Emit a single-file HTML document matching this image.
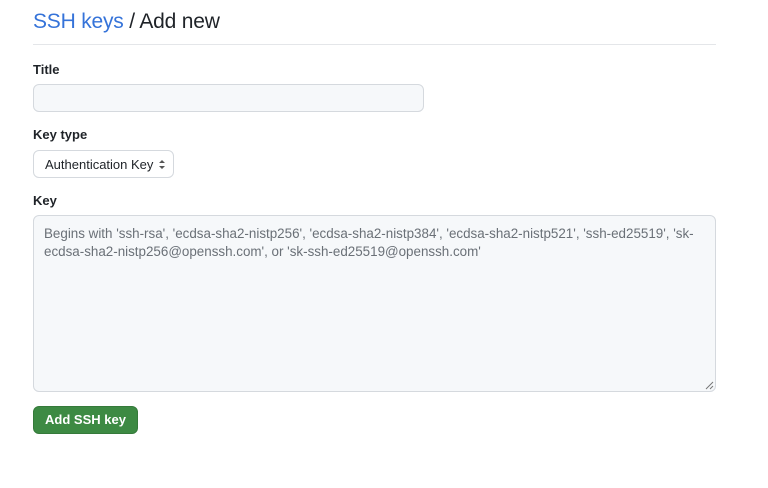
<!DOCTYPE html>
<html><head><style>
body{margin:0;background:#fff;font-family:"Liberation Sans",Arial,sans-serif;color:#1f2328;width:768px;height:488px;overflow:hidden;position:relative}
.a{position:absolute}
h1{position:absolute;left:33px;top:10px;margin:0;font-size:21px;font-weight:400;letter-spacing:-0.2px}
h1 span{color:#3573d9}
.hr{left:33px;top:44px;width:683px;height:1px;background:#e4e6e9}
.lbl{font-size:13px;font-weight:700;left:33px}
.box{border:1px solid #d5d9de;border-radius:6px;background:#f6f8fa;box-sizing:border-box}
</style></head><body>
<h1><span>SSH keys</span> / Add new</h1>
<div class="a hr"></div>
<div class="a lbl" style="top:62px">Title</div>
<div class="a box" style="left:33px;top:84px;width:391px;height:28px"></div>
<div class="a lbl" style="top:127px">Key type</div>
<div class="a box" style="left:33px;top:150px;width:141px;height:28px;background:#fff;font-size:13px;padding:6px 0 0 11px">Authentication Key
<svg class="a" style="left:124px;top:8px" width="8" height="11" viewBox="0 0 8 11"><path d="M1 4L4 1L7 4ZM1 7L4 10L7 7Z" fill="#555"/></svg></div>
<div class="a lbl" style="top:193px">Key</div>
<div class="a box" style="left:33px;top:215px;width:683px;height:177px;font-size:13.4px;color:#6a7077;padding:9px 10px;line-height:18px;white-space:nowrap">Begins with 'ssh-rsa', 'ecdsa-sha2-nistp256', 'ecdsa-sha2-nistp384', 'ecdsa-sha2-nistp521', 'ssh-ed25519', 'sk-<br>ecdsa-sha2-nistp256@openssh.com', or 'sk-ssh-ed25519@openssh.com'
<svg class="a" style="left:671px;top:165px" width="9" height="9"><path d="M1 8L8 1M5 8L8 5" stroke="#777" stroke-width="1"/></svg></div>
<div class="a" style="left:33px;top:406px;width:105px;height:28px;background:#3d8a43;border-radius:6px;color:#fff;font-size:13px;font-weight:700;text-align:center;line-height:26px;box-sizing:border-box;border:1px solid #357a3a">Add SSH key</div>
</body></html>
